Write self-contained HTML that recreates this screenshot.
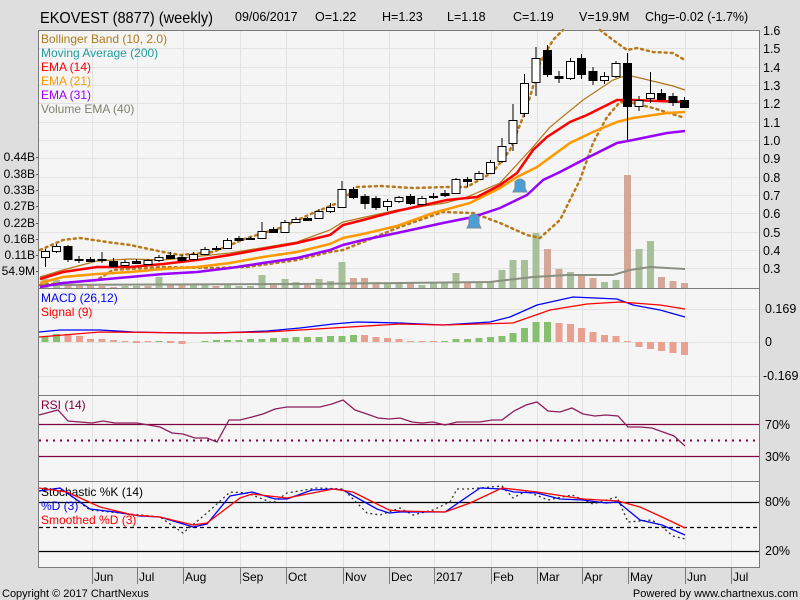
<!DOCTYPE html>
<html><head><meta charset="utf-8"><style>
html,body{margin:0;padding:0;background:#dedede;}
svg{display:block;font-family:"Liberation Sans",sans-serif;}
</style></head><body>
<svg width="800" height="600" viewBox="0 0 800 600" xmlns="http://www.w3.org/2000/svg">
<rect width="800" height="600" fill="#dedede"/>
<!-- header -->
<text x="40" y="23" font-size="16" fill="#000" textLength="173" lengthAdjust="spacingAndGlyphs">EKOVEST (8877) (weekly)</text>
<g font-size="12.5" fill="#000">
<text x="235" y="21">09/06/2017</text>
<text x="315" y="21">O=1.22</text>
<text x="382" y="21">H=1.23</text>
<text x="447" y="21">L=1.18</text>
<text x="513" y="21">C=1.19</text>
<text x="579" y="21">V=19.9M</text>
<text x="645" y="21">Chg=-0.02 (-1.7%)</text>
</g>
<!-- panels bg -->
<rect x="38.5" y="30.5" width="721" height="537" fill="#f5f5f5"/>
<!-- vertical grid -->
<g stroke="#e2e2e2" stroke-width="1">
<path d="M92.5 31V567M137.5 31V567M183.5 31V567M240.5 31V567M286.5 31V567M343.5 31V567M389.5 31V567M434.5 31V567M491.5 31V567M537.5 31V567M582.5 31V567M628.5 31V567M685.5 31V567M731.5 31V567"/>
<path d="M39 48.5H759M39 67.5H759M39 85.5H759M39 103.5H759M39 122.5H759M39 140.5H759M39 158.5H759M39 177.5H759M39 195.5H759M39 213.5H759M39 232.5H759M39 250.5H759M39 268.5H759"/>
<path d="M39 309.5H759M39 342.5H759M39 376.5H759"/>
</g>
<!-- panel borders -->
<g fill="none" stroke="#7a7a7a" stroke-width="1">
<rect x="38.5" y="30.5" width="721" height="258"/>
<rect x="38.5" y="288.5" width="721" height="107"/>
<rect x="38.5" y="395.5" width="721" height="86"/>
<rect x="38.5" y="481.5" width="721" height="86"/>
</g>
<!-- x axis ticks -->
<g stroke="#7a7a7a"><path d="M92.5 567V584M137.5 567V584M183.5 567V584M240.5 567V584M286.5 567V584M343.5 567V584M389.5 567V584M434.5 567V584M491.5 567V584M537.5 567V584M582.5 567V584M628.5 567V584M685.5 567V584M731.5 567V584"/></g>
<g font-size="12" fill="#000">
<text x="94" y="581">Jun</text><text x="139" y="581">Jul</text><text x="185" y="581">Aug</text><text x="242" y="581">Sep</text><text x="288" y="581">Oct</text><text x="345" y="581">Nov</text><text x="391" y="581">Dec</text><text x="436" y="581">2017</text><text x="493" y="581">Feb</text><text x="539" y="581">Mar</text><text x="584" y="581">Apr</text><text x="630" y="581">May</text><text x="687" y="581">Jun</text><text x="733" y="581">Jul</text>
</g>
<!-- right price axis -->
<g font-size="12.5" fill="#000">
<text x="763" y="35">1.6</text><text x="763" y="53">1.5</text><text x="763" y="72">1.4</text><text x="763" y="90">1.3</text><text x="763" y="108">1.2</text><text x="763" y="127">1.1</text><text x="763" y="145">1.0</text><text x="763" y="163">0.9</text><text x="763" y="182">0.8</text><text x="763" y="200">0.7</text><text x="763" y="218">0.6</text><text x="763" y="237">0.5</text><text x="763" y="255">0.4</text><text x="763" y="273">0.3</text>
<text x="765" y="313">0.169</text><text x="765" y="346">0</text><text x="763" y="380">-0.169</text>
<text x="765" y="429">70%</text><text x="765" y="461">30%</text>
<text x="765" y="506">80%</text><text x="765" y="555">20%</text>
</g>
<!-- left volume axis -->
<g font-size="12" fill="#000" text-anchor="end">
<text x="35" y="161">0.44B</text><text x="35" y="178">0.38B</text><text x="35" y="194">0.33B</text><text x="35" y="210">0.27B</text><text x="35" y="227">0.22B</text><text x="35" y="243">0.16B</text><text x="35" y="259">0.11B</text><text x="35" y="275">54.9M</text>
</g>
<g stroke="#555"><path d="M36 157.5H38M36 174.5H38M36 190.5H38M36 206.5H38M36 223.5H38M36 239.5H38M36 255.5H38M36 271.5H38"/></g>
<!-- legend -->
<g font-size="12">
<text x="41" y="43" fill="#b07a1c">Bollinger Band (10, 2.0)</text>
<text x="41" y="57" fill="#1f9c9c">Moving Average (200)</text>
<text x="41" y="71" fill="#ff0000">EMA (14)</text>
<text x="41" y="85" fill="#ff9900">EMA (21)</text>
<text x="41" y="99" fill="#9900ff">EMA (31)</text>
<text x="41" y="113" fill="#808070">Volume EMA (40)</text>
</g>
<!-- volume bars -->
<g fill="#a7c09a">
<rect x="41.5" y="279" width="7" height="9"/><rect x="53" y="280" width="7" height="8"/>
<rect x="121.5" y="286" width="7" height="2"/><rect x="133" y="286" width="7" height="2"/>
<rect x="155.5" y="277" width="7" height="11"/><rect x="190" y="284" width="7" height="4"/>
<rect x="201.5" y="285" width="7" height="3"/><rect x="224" y="285" width="7" height="3"/>
<rect x="235.5" y="286" width="7" height="2"/><rect x="247" y="286" width="7" height="2"/>
<rect x="258.5" y="275" width="7" height="13"/><rect x="281.5" y="279" width="7" height="9"/>
<rect x="292.5" y="282" width="7" height="6"/><rect x="315.5" y="279" width="7" height="9"/>
<rect x="327" y="281" width="7" height="7"/><rect x="338.5" y="262" width="7" height="26"/>
<rect x="384" y="284" width="7" height="4"/><rect x="395.5" y="284" width="7" height="4"/>
<rect x="418.5" y="285" width="7" height="3"/><rect x="430" y="282" width="7" height="6"/>
<rect x="441" y="282" width="7" height="6"/><rect x="452.5" y="273" width="7" height="15"/>
<rect x="475.5" y="283" width="7" height="5"/><rect x="487" y="282" width="7" height="6"/>
<rect x="498.5" y="270" width="7" height="18"/><rect x="509.5" y="260" width="7" height="28"/>
<rect x="521" y="260" width="7" height="28"/><rect x="532.5" y="233" width="7" height="55"/>
<rect x="567" y="272" width="7" height="16"/><rect x="601" y="282" width="7" height="6"/>
<rect x="612.5" y="280" width="7" height="8"/><rect x="635.5" y="249" width="7" height="39"/>
<rect x="647" y="241" width="7" height="47"/>
</g>
<g fill="#d4a898">
<rect x="64.5" y="285" width="7" height="3"/><rect x="76" y="285" width="7" height="3"/>
<rect x="87" y="285" width="7" height="3"/><rect x="98.5" y="286" width="7" height="2"/>
<rect x="110" y="287" width="7" height="1"/><rect x="144.5" y="286" width="7" height="2"/>
<rect x="167" y="285" width="7" height="3"/><rect x="178.5" y="285" width="7" height="3"/>
<rect x="212.5" y="286" width="7" height="2"/><rect x="270" y="283" width="7" height="5"/>
<rect x="304" y="285" width="7" height="3"/><rect x="350" y="278" width="7" height="10"/>
<rect x="361" y="278" width="7" height="10"/><rect x="372.5" y="284" width="7" height="4"/>
<rect x="407" y="283" width="7" height="5"/><rect x="464" y="283" width="7" height="5"/>
<rect x="544" y="249" width="7" height="39"/><rect x="555.5" y="269" width="7" height="19"/>
<rect x="578" y="275" width="7" height="13"/><rect x="589.5" y="278" width="7" height="10"/>
<rect x="624" y="175" width="7" height="113"/><rect x="658" y="277" width="7" height="11"/>
<rect x="669.5" y="281" width="7" height="7"/><rect x="681" y="283" width="7" height="5"/>
</g>
<!-- volume EMA -->
<polyline fill="none" stroke="#8a9080" stroke-width="2" points="39,285 300,284 400,283 490,282 533,277 567,275 613,275 630,270 650,267 685,269"/>
<!-- bollinger -->
<polyline fill="none" stroke="#b0761a" stroke-width="1.2" points="40,277 63,270 97,261 130,259 163,260 230,253 297,242 330,230 343,222 397,210 445,203 467,197 500,183 533,147 550,127 583,100 613,80 627,75 640,78 673,86 685,90"/>
<g fill="none" stroke="#b87a1a" stroke-width="2.5" stroke-dasharray="2,4" stroke-linecap="round">
<polyline points="40,250 63,240 80,238 107,242 130,245 163,252 180,255 213,252 247,238 280,228 313,213 340,202 357,187 380,186 413,188 445,187 467,187 493,172 510,150 527,107 540,63 553,40 563,30"/>
<polyline points="600,30 613,40 627,50 637,48 653,52 673,53 683,59"/>
<polyline points="40,285 97,280 113,270 163,267 213,268 247,267 297,260 330,252 343,250 363,242 397,228 443,212 473,213 500,223 527,235 540,238 560,220 580,180 593,143 607,117 620,102 633,103 653,108 685,118"/>
</g>
<!-- EMAs -->
<polyline fill="none" stroke="#9900ff" stroke-width="2.5" points="40,287 63,283 97,280 130,277 163,274 197,272 230,268 263,263 297,258 330,250 343,245 363,240 397,233 443,223 473,217 500,208 527,195 543,180 560,172 583,160 617,143 633,140 667,133 685,131"/>
<polyline fill="none" stroke="#ff9900" stroke-width="2.5" points="40,283 63,277 97,274 130,272 163,269 197,267 230,263 263,257 297,252 330,244 343,238 363,234 397,226 433,213 470,203 500,188 517,177 537,167 570,143 593,132 617,122 633,118 667,113 685,112"/>
<polyline fill="none" stroke="#ff0000" stroke-width="2.5" points="40,279 63,272 97,267 130,267 163,264 197,260 230,255 263,249 297,243 330,235 343,225 363,220 397,211 447,200 477,197 500,185 517,173 533,150 547,137 570,122 587,115 617,100 633,100 685,102"/>
<!-- candles -->
<g stroke="#000" stroke-width="1">
<path d="M45.5 249V267M56.5 244V253M68 245V262M79 256V263M90.5 257V262M102 252V263M113.5 258V268M125 260V266M136.5 259V264M148 259V265M159 255V262M170.5 252V259M182 255V262M193.5 252V260M205 247V255M216.5 246V250M227.5 238V249M239 236V241M250.5 237V240M262 222V239M273.5 227V233M285 220V233M296 217V223M307.5 217V221M319 209V219M330.5 203V213M342 181V208M353.5 187V199M365 194V209M376 196V210M387.5 199V211M399 196V203M410.5 194V205M422 196V206M433.5 193V199M445 190V197M456 178V194M467.5 177V187M479 171V180M490.5 160V174M502 138V163M513 104V151M524.5 74V117M536 47V96M547.5 45V77M559 71V83M570.5 58V80M581.5 54V79M593 67V85M604.5 72V84M616 61V78M627.5 53V140M639 96V111M650.5 72V103M661.5 89V102M673 93V106M684.5 97V108"/>
</g>
<g stroke="#000" stroke-width="1" fill="#fff">
<rect x="41.5" y="251.5" width="8" height="6"/><rect x="52.5" y="246.5" width="8" height="5"/>
<rect x="121" y="262.5" width="8" height="3"/><rect x="144" y="260.5" width="8" height="4"/>
<rect x="155" y="257.5" width="8" height="3"/><rect x="189.5" y="254.5" width="8" height="5"/>
<rect x="201" y="249.5" width="8" height="5"/><rect x="223.5" y="240.5" width="8" height="8"/>
<rect x="258" y="231.5" width="8" height="7"/><rect x="281" y="222.5" width="8" height="10"/>
<rect x="292" y="219.5" width="8" height="3"/><rect x="315" y="211.5" width="8" height="7"/>
<rect x="326.5" y="207.5" width="8" height="4"/><rect x="338" y="189.5" width="8" height="18"/>
<rect x="383.5" y="201.5" width="8" height="5"/><rect x="395" y="197.5" width="8" height="4"/>
<rect x="418" y="198.5" width="8" height="6"/><rect x="452" y="179.5" width="8" height="14"/>
<rect x="475" y="173.5" width="8" height="6"/><rect x="486.5" y="162.5" width="8" height="11"/>
<rect x="498" y="146.5" width="8" height="15"/><rect x="509" y="120.5" width="8" height="23"/>
<rect x="520.5" y="83.5" width="8" height="30"/><rect x="532" y="58.5" width="8" height="24"/>
<rect x="566.5" y="61.5" width="8" height="17"/><rect x="600.5" y="76.5" width="8" height="4"/>
<rect x="612" y="63.5" width="8" height="13"/><rect x="635" y="100.5" width="8" height="6"/>
<rect x="646.5" y="93.5" width="8" height="5"/>
</g>
<g stroke="#000" stroke-width="1" fill="#000">
<rect x="64" y="246.5" width="8" height="13"/><rect x="75" y="259.5" width="8" height="1"/>
<rect x="86.5" y="259.5" width="8" height="2"/><rect x="98" y="259.5" width="8" height="1"/>
<rect x="109.5" y="261.5" width="8" height="5"/><rect x="132.5" y="261.5" width="8" height="2"/>
<rect x="166.5" y="255.5" width="8" height="3"/><rect x="178" y="257.5" width="8" height="3"/>
<rect x="212.5" y="248.5" width="8" height="1"/><rect x="235" y="238.5" width="8" height="2"/>
<rect x="246.5" y="238.5" width="8" height="1"/><rect x="269.5" y="229.5" width="8" height="3"/>
<rect x="303.5" y="218.5" width="8" height="2"/><rect x="349.5" y="189.5" width="8" height="8"/>
<rect x="361" y="196.5" width="8" height="7"/><rect x="372" y="198.5" width="8" height="9"/>
<rect x="406.5" y="196.5" width="8" height="7"/><rect x="429.5" y="196.5" width="8" height="1"/>
<rect x="441" y="193.5" width="8" height="2"/><rect x="463.5" y="179.5" width="8" height="2"/>
<rect x="543.5" y="50.5" width="8" height="24"/><rect x="555" y="76.5" width="8" height="2"/>
<rect x="577.5" y="58.5" width="8" height="16"/><rect x="589" y="71.5" width="8" height="9"/>
<rect x="623.5" y="63.5" width="8" height="43"/><rect x="657.5" y="93.5" width="8" height="6"/>
<rect x="669" y="96.5" width="8" height="6"/><rect x="680.5" y="100.5" width="8" height="7"/>
</g>
<!-- bells -->
<g fill="#4b9fd5" stroke="#7a8a96" stroke-width="1">
<path d="M467 228 L469 224 L469 217 Q474 211 479 217 L479 224 L481 228 Z"/>
<path d="M513 192 L515 188 L515 182 Q520 176 525 182 L525 188 L527 192 Z"/>
</g>
<!-- MACD -->
<text x="41" y="302" font-size="12" fill="#0000ff">MACD (26,12)</text>
<text x="41" y="316" font-size="12" fill="#ff0000">Signal (9)</text>
<g fill="#86c06f">
<rect x="41.5" y="336" width="7" height="6"/><rect x="53" y="334" width="7" height="8"/>
<rect x="155.5" y="341" width="7" height="1"/><rect x="201.5" y="341" width="7" height="1"/>
<rect x="213" y="340" width="7" height="2"/><rect x="224" y="340" width="7" height="2"/>
<rect x="235.5" y="340" width="7" height="2"/><rect x="247" y="339" width="7" height="3"/>
<rect x="258.5" y="339" width="7" height="3"/><rect x="270" y="338" width="7" height="4"/>
<rect x="281.5" y="338" width="7" height="4"/><rect x="292.5" y="337" width="7" height="5"/>
<rect x="304" y="337" width="7" height="5"/><rect x="315.5" y="337" width="7" height="5"/>
<rect x="327" y="336" width="7" height="6"/><rect x="338.5" y="336" width="7" height="6"/>
<rect x="350" y="335" width="7" height="7"/>
<rect x="441" y="341" width="7" height="1"/><rect x="452.5" y="339" width="7" height="3"/>
<rect x="464" y="339" width="7" height="3"/><rect x="475.5" y="338" width="7" height="4"/>
<rect x="487" y="337" width="7" height="5"/><rect x="498.5" y="336" width="7" height="6"/>
<rect x="509.5" y="333" width="7" height="9"/><rect x="521" y="328" width="7" height="14"/>
<rect x="532.5" y="322" width="7" height="20"/><rect x="544" y="322" width="7" height="20"/>
</g>
<g fill="#e8a090">
<rect x="64.5" y="334" width="7" height="8"/><rect x="76" y="336" width="7" height="6"/>
<rect x="87" y="339" width="7" height="3"/><rect x="98.5" y="339" width="7" height="3"/>
<rect x="110" y="340" width="7" height="2"/><rect x="121.5" y="341" width="7" height="1"/>
<rect x="133" y="341" width="7" height="2"/><rect x="144.5" y="341" width="7" height="1"/>
<rect x="167" y="341" width="7" height="2"/><rect x="178.5" y="341" width="7" height="3"/>
<rect x="361" y="335" width="7" height="7"/><rect x="372.5" y="337" width="7" height="5"/>
<rect x="384" y="338" width="7" height="4"/><rect x="395.5" y="339" width="7" height="3"/>
<rect x="407" y="341" width="7" height="1"/><rect x="418.5" y="341" width="7" height="1"/>
<rect x="430" y="341" width="7" height="1"/>
<rect x="555.5" y="323" width="7" height="19"/><rect x="567" y="324" width="7" height="18"/>
<rect x="578" y="328" width="7" height="14"/><rect x="589.5" y="332" width="7" height="10"/>
<rect x="601" y="335" width="7" height="7"/><rect x="612.5" y="336" width="7" height="6"/>
<rect x="624" y="341" width="7" height="1"/><rect x="635.5" y="342" width="7" height="5"/>
<rect x="647" y="342" width="7" height="7"/><rect x="658" y="342" width="7" height="9"/>
<rect x="669.5" y="342" width="7" height="11"/><rect x="681" y="342" width="7" height="13"/>
</g>
<polyline fill="none" stroke="#0000ff" stroke-width="1.3" points="39,332 60,330 100,330 133,332 183,333 217,333 267,331 300,328 333,324 357,322 400,323 443,325 490,322 510,317 537,305 573,297 617,299 633,305 660,310 685,317"/>
<polyline fill="none" stroke="#ff0000" stroke-width="1.3" points="39,337 100,332 200,333 267,332 333,328 400,324 443,325 513,323 550,310 587,304 620,302 660,305 685,309"/>
<!-- RSI -->
<g stroke="#800040" stroke-width="1.2">
<path d="M39 424.5H759M39 456.5H759"/>
<path d="M39 440.5H759" stroke-width="2" stroke-dasharray="2,5"/>
</g>
<text x="41" y="409" font-size="12" fill="#800040">RSI (14)</text>
<polyline fill="none" stroke="#8b1f5c" stroke-width="1.3" points="39,415 58,410 68,421 92,423 103,421 115,423 137,423 160,427 172,433 183,434 195,438 207,438 217,442 229,420 240,420 252,417 263,414 275,409 287,407 298,407 320,407 332,404 343,400 355,410 367,414 378,418 389,419 400,418 412,422 422,423 433,422 445,425 457,422 468,422 480,422 492,420 502,420 514,411 526,405 537,402 548,411 560,412 572,408 583,414 595,416 606,415 618,416 628,427 640,427 652,428 663,432 674,436 685,446"/>
<!-- Stochastic -->
<g stroke="#000" stroke-width="1.2">
<path d="M39 502.5H759M39 551.5H759"/>
<path d="M39 527.5H759" stroke-dasharray="4,3"/>
</g>
<text x="41" y="496" font-size="12" fill="#000">Stochastic %K (14)</text>
<text x="41" y="510" font-size="12" fill="#0000ff">%D (3)</text>
<text x="41" y="524" font-size="12" fill="#ff0000">Smoothed %D (3)</text>
<polyline fill="none" stroke="#333" stroke-width="1.3" stroke-dasharray="2,3" points="39,491 60,488 90,510 160,517 183,533 207,513 230,492 247,493 273,503 287,493 317,488 343,489 367,513 380,515 400,508 413,515 433,510 450,502 457,489 468,489 480,488 502,486 513,498 526,491 548,500 572,495 593,504 617,497 628,522 640,521 652,520 662,527 673,536 685,539"/>
<polyline fill="none" stroke="#0000ff" stroke-width="1.3" points="39,491 60,488 90,509 115,512 140,516 160,517 193,527 207,524 230,496 252,492 275,499 287,499 312,490 333,489 343,490 377,509 389,513 400,512 445,512 480,488 502,489 514,492 537,493 560,499 583,500 606,503 618,502 640,520 662,525 685,535"/>
<polyline fill="none" stroke="#ff0000" stroke-width="1.3" points="39,488 67,492 100,507 133,515 160,517 193,525 207,523 240,498 252,494 287,498 333,489 353,492 389,510 400,511 445,512 470,503 502,488 537,492 583,499 618,501 640,507 662,517 685,528"/>
<!-- footer -->
<text x="2" y="597" font-size="11" fill="#000">Copyright © 2017 ChartNexus</text>
<text x="798" y="597" font-size="11" fill="#000" text-anchor="end">Powered by www.chartnexus.com</text>
</svg>
</body></html>
